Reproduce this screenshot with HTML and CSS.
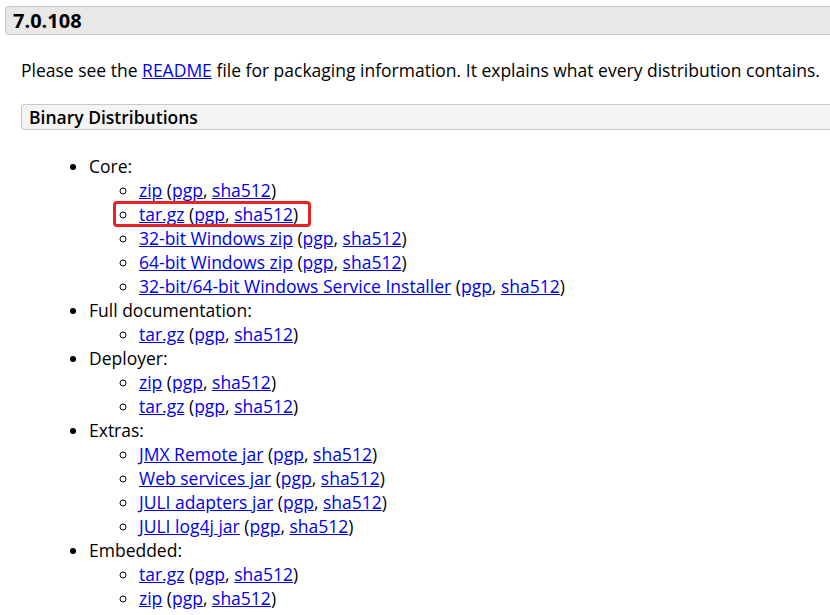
FILE: index.html
```html
<!DOCTYPE html>
<html>
<head>
<meta charset="utf-8">
<link rel="stylesheet" href="styles.css">
</head>
<body>
<div class="page">
  <h3 class="version">7.0.108</h3>
  <div class="content">
    <p class="intro">Please see the <a href="#">README</a> file for packaging information. It explains what every distribution contains.</p>
    <h4 class="sub">Binary Distributions</h4>
    <ul class="dist">
      <li>Core:
        <ul>
          <li><a href="#">zip</a> (<a href="#">pgp</a>, <a href="#">sha512</a>)</li>
          <li class="marked"><span class="hl"></span><a href="#">tar.gz</a> (<a href="#">pgp</a>, <a href="#">sha512</a>)</li>
          <li><a href="#">32-bit Windows zip</a> (<a href="#">pgp</a>, <a href="#">sha512</a>)</li>
          <li><a href="#">64-bit Windows zip</a> (<a href="#">pgp</a>, <a href="#">sha512</a>)</li>
          <li><a href="#">32-bit/64-bit Windows Service Installer</a> (<a href="#">pgp</a>, <a href="#">sha512</a>)</li>
        </ul>
      </li>
      <li>Full documentation:
        <ul>
          <li><a href="#">tar.gz</a> (<a href="#">pgp</a>, <a href="#">sha512</a>)</li>
        </ul>
      </li>
      <li>Deployer:
        <ul>
          <li><a href="#">zip</a> (<a href="#">pgp</a>, <a href="#">sha512</a>)</li>
          <li><a href="#">tar.gz</a> (<a href="#">pgp</a>, <a href="#">sha512</a>)</li>
        </ul>
      </li>
      <li>Extras:
        <ul>
          <li><a href="#">JMX Remote jar</a> (<a href="#">pgp</a>, <a href="#">sha512</a>)</li>
          <li><a href="#">Web services jar</a> (<a href="#">pgp</a>, <a href="#">sha512</a>)</li>
          <li><a href="#">JULI adapters jar</a> (<a href="#">pgp</a>, <a href="#">sha512</a>)</li>
          <li><a href="#">JULI log4j jar</a> (<a href="#">pgp</a>, <a href="#">sha512</a>)</li>
        </ul>
      </li>
      <li>Embedded:
        <ul>
          <li><a href="#">tar.gz</a> (<a href="#">pgp</a>, <a href="#">sha512</a>)</li>
          <li><a href="#">zip</a> (<a href="#">pgp</a>, <a href="#">sha512</a>)</li>
        </ul>
      </li>
    </ul>
  </div>
</div>
</body>
</html>
```
FILE: styles.css
```css
html, body {
  margin: 0;
  padding: 0;
  background: #fff;
  overflow: hidden;
}
body {
  font-family: "Open Sans", "Liberation Sans", sans-serif;
  font-size: 17.5px;
  line-height: 24px;
  color: #000;
}
.page {
  padding: 6px 0 0 5px;
}
.version {
  margin: 0;
  height: 27px;
  padding: 0 7px;
  background: #e8e8e8;
  border: 1px solid #c8c8c8;
  border-right: none;
  border-radius: 4px 0 0 4px;
  font-size: 20px;
  font-weight: 700;
  line-height: 27px;
}
.content {
  padding-left: 16px;
}
.intro {
  margin: 23px 0 0 0;
  white-space: nowrap;
}
a {
  color: #0000ee;
  text-decoration: underline;
}
.sub {
  margin: 22px 0 0 0;
  height: 24px;
  padding: 0 7px;
  background: #f4f4f4;
  border: 1px solid #c8c8c8;
  border-right: none;
  border-radius: 4px 0 0 4px;
  font-size: 17.5px;
  font-weight: 600;
  line-height: 24px;
}
.dist {
  margin: 24px 0 0 0;
  padding-left: 68px;
  list-style: disc;
}
.dist ul {
  margin: 0;
  padding-left: 50px;
  list-style: circle;
}
.marked {
  position: relative;
}
.hl {
  position: absolute;
  left: -26px;
  top: -1px;
  width: 192px;
  height: 20px;
  border: 3px solid #e82222;
  border-radius: 4px;
}
```
